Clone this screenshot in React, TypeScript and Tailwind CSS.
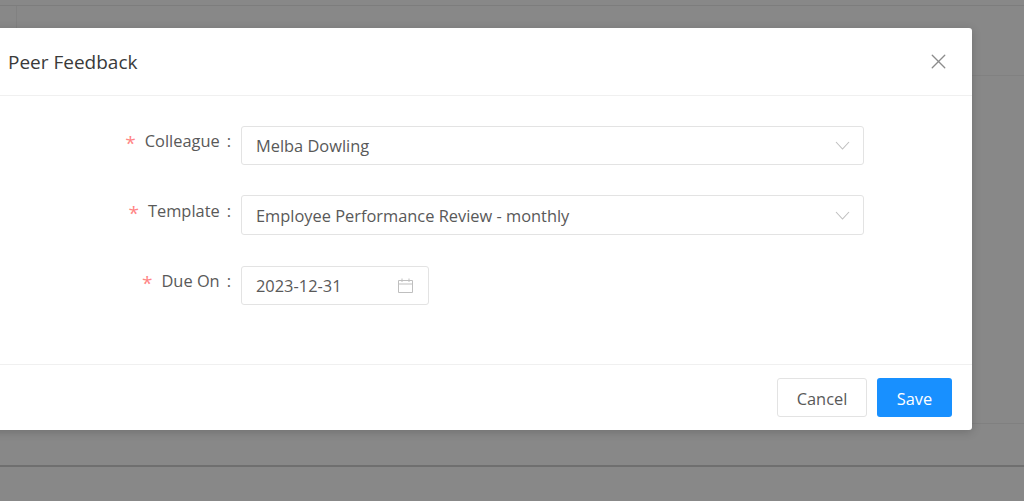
import { X } from "lucide-react";

const font = { fontFamily: '"Open Sans", "Noto Sans", sans-serif' };

function Label({ children, low }: { children: string; low?: boolean }) {
  return (
    <div
      className={`ml-[16px] flex w-[241px] shrink-0 items-center justify-end text-[16.4px] leading-6 text-[#595959] ${
        low ? "pb-2" : "pb-[10px]"
      }`}
    >
      <span className="mr-[9px] h-6 text-[19px] leading-[28px] text-[#ff8585]">*</span>
      <span>{children}</span>
      <span className="ml-[7px] mr-[10px]">:</span>
    </div>
  );
}

function Chevron() {
  return (
    <svg width="15" height="9" viewBox="0 0 15 9" fill="none" stroke="#bfbfbf" strokeWidth="1.1">
      <path d="M1 1l6.5 7L14 1" />
    </svg>
  );
}

function Select({ value, tall }: { value: string; tall?: boolean }) {
  return (
    <div
      className={`flex w-[623px] items-center justify-between rounded-[3px] border border-[#e3e3e3] bg-white pl-[14px] pr-[13px] text-[16.4px] text-[#595959] ${
        tall ? "h-10" : "h-[39px]"
      }`}
    >
      <span className="pt-[2px]">{value}</span>
      <Chevron />
    </div>
  );
}

function CalendarIcon() {
  return (
    <svg width="17" height="17" viewBox="0 0 17 17" fill="none" stroke="#bfbfbf" strokeWidth="1">
      <path d="M1.5 3.5h14v12h-14z" />
      <path d="M1.5 7h14M5 1.5v3.5M12 1.5v3.5" />
    </svg>
  );
}

export default function App() {
  return (
    <div style={font} className="relative h-[501px] w-[1024px] overflow-hidden bg-[#888888]">
      {/* page behind the mask */}
      <div className="h-[6px] border-b border-[#7d7d7d]" />
      <div className="ml-[16px] h-[70px] border-b border-l border-[#818181]" />
      <div className="h-[348px] border-b border-[#808080]" />
      <div className="h-[43px] border-b-2 border-[#6f6f6f]" />

      <div className="absolute left-[-16px] top-[28px] h-[402px] w-[988px] rounded-[3px] bg-white shadow-[0_2px_10px_rgba(0,0,0,0.18)]">
        <div className="flex h-[68px] items-center justify-between border-b border-[#f0f0f0] pl-6 pr-[21px]">
          <h1 className="pt-[2px] text-[19px] font-medium text-[#3a3a3a]">Peer Feedback</h1>
          <X size={25} strokeWidth={1.3} className="text-[#8c8c8c]" />
        </div>

        <div className="flex h-[268px] flex-col gap-[30px] pt-[30px]">
          <div className="flex items-center">
            <Label>Colleague</Label>
            <Select value="Melba Dowling" />
          </div>
          <div className="flex items-center">
            <Label low>Template</Label>
            <Select value="Employee Performance Review - monthly" tall />
          </div>
          <div className="mt-px flex items-center">
            <Label>Due On</Label>
            <div className="flex h-[39px] w-[188px] items-center justify-between rounded-[3px] border border-[#e3e3e3] bg-white px-[14px] text-[16.4px] text-[#595959]">
              <span className="pt-[2px]">2023-12-31</span>
              <CalendarIcon />
            </div>
          </div>
        </div>

        <div className="flex h-[66px] items-center justify-end gap-[10px] border-t border-[#f0f0f0] pb-px pr-5">
          <button className="h-[39px] w-[90px] rounded-[3px] border border-[#e3e3e3] bg-white pt-[5px] text-[16.4px] text-[#595959]">
            Cancel
          </button>
          <button className="h-[39px] w-[75px] rounded-[3px] bg-[#1890ff] pt-[5px] text-[16.4px] text-white">
            Save
          </button>
        </div>
      </div>
    </div>
  );
}
